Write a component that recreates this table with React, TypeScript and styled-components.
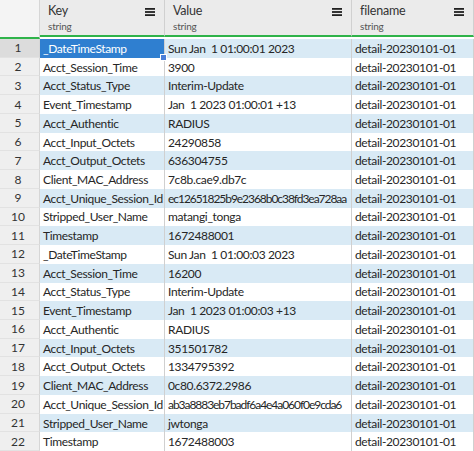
import React from "react";
import styled, { createGlobalStyle } from "styled-components";

const Global = createGlobalStyle`
  html, body { margin: 0; padding: 0; background: #fff; }
  body { font-family: "Lato", "Noto Sans", sans-serif; color: #222; overflow: hidden; }
`;

const ROW_H = 18.74;

const Grid = styled.div`
  display: grid;
  grid-template-columns: 40px 125px 187px 122px;
  width: 474px;
  overflow: hidden;
`;

const HeaderCorner = styled.div`
  height: 37px;
  background: #f4f4f4;
  border-right: 1px solid #d6d6d6;
  border-bottom: 2px solid #2fb34a;
`;

const HeaderCell = styled.div`
  height: 37px;
  box-sizing: border-box;
  background: #ebebeb;
  border-right: 1px solid #d0d0d0;
  border-bottom: 2px solid #2fb34a;
  padding: 3px 9px 0 8px;
  display: flex;
  justify-content: space-between;
  align-items: flex-start;
`;

const HeaderText = styled.div`
  display: flex;
  flex-direction: column;
`;

const HeaderTitle = styled.span`
  font-size: 12.5px;
  letter-spacing: -0.2px;
  line-height: 16px;
  color: #333;
`;

const HeaderType = styled.span`
  font-size: 10px;
  letter-spacing: -0.2px;
  line-height: 15px;
  color: #555;
`;

const MenuIcon = styled.svg`
  margin-top: 5px;
  flex: none;
`;

const NumCell = styled.div<{ $sel?: boolean }>`
  height: ${ROW_H}px;
  box-sizing: border-box;
  background: ${(p) => (p.$sel ? "#dcdcdc" : "#efefef")};
  border-right: 1px solid #d6d6d6;
  border-bottom: 1px solid #e2e2e2;
  font-size: 12px;
  color: #333;
  display: flex;
  align-items: center;
  justify-content: center;
  padding-right: 3px;
`;

const Cell = styled.div<{ $odd: boolean; $sel?: boolean; $tight?: boolean }>`
  position: relative;
  height: ${ROW_H}px;
  box-sizing: border-box;
  background: ${(p) => (p.$sel ? "#2f7fd0" : p.$odd ? "#d9eaf5" : "#ffffff")};
  color: ${(p) => (p.$sel ? "#ffffff" : "#262626")};
  border-right: 1px solid #d0d0d0;
  font-size: 12px;
  letter-spacing: ${(p) => (p.$tight ? "-1.05px" : "-0.35px")};
  padding: 0 0 0 3px;
  white-space: pre;
  overflow: ${(p) => (p.$sel ? "visible" : "hidden")};
  display: flex;
  align-items: center;
`;

const Handle = styled.span`
  position: absolute;
  right: -3px;
  bottom: -3px;
  width: 5px;
  height: 5px;
  background: #4a7fd8;
  border: 1px solid #fff;
  box-sizing: content-box;
  z-index: 2;
`;

const rows: [string, string][] = [
  ["_DateTimeStamp", "Sun Jan  1 01:00:01 2023"],
  ["Acct_Session_Time", "3900"],
  ["Acct_Status_Type", "Interim-Update"],
  ["Event_Timestamp", "Jan  1 2023 01:00:01 +13"],
  ["Acct_Authentic", "RADIUS"],
  ["Acct_Input_Octets", "24290858"],
  ["Acct_Output_Octets", "636304755"],
  ["Client_MAC_Address", "7c8b.cae9.db7c"],
  ["Acct_Unique_Session_Id", "ec12651825b9e2368b0c38fd3ea728aa"],
  ["Stripped_User_Name", "matangi_tonga"],
  ["Timestamp", "1672488001"],
  ["_DateTimeStamp", "Sun Jan  1 01:00:03 2023"],
  ["Acct_Session_Time", "16200"],
  ["Acct_Status_Type", "Interim-Update"],
  ["Event_Timestamp", "Jan  1 2023 01:00:03 +13"],
  ["Acct_Authentic", "RADIUS"],
  ["Acct_Input_Octets", "351501782"],
  ["Acct_Output_Octets", "1334795392"],
  ["Client_MAC_Address", "0c80.6372.2986"],
  ["Acct_Unique_Session_Id", "ab3a8883eb7badf6a4e4a060f0e9cda6"],
  ["Stripped_User_Name", "jwtonga"],
  ["Timestamp", "1672488003"],
];

const Menu = () => (
  <MenuIcon width="10" height="8" viewBox="0 0 10 8">
    <rect x="0" y="0" width="10" height="1.8" fill="#222" />
    <rect x="0" y="3.1" width="10" height="1.8" fill="#222" />
    <rect x="0" y="6.2" width="10" height="1.8" fill="#222" />
  </MenuIcon>
);

const Header = ({ title }: { title: string }) => (
  <HeaderCell>
    <HeaderText>
      <HeaderTitle>{title}</HeaderTitle>
      <HeaderType>string</HeaderType>
    </HeaderText>
    <Menu />
  </HeaderCell>
);

export default function App() {
  return (
    <>
      <Global />
      <Grid>
        <HeaderCorner />
        <Header title="Key" />
        <Header title="Value" />
        <Header title="filename" />
        {rows.map(([k, v], i) => {
          const odd = i % 2 === 0;
          const sel = i === 0;
          return (
            <React.Fragment key={i}>
              <NumCell $sel={sel}>{i + 1}</NumCell>
              <Cell $odd={odd} $sel={sel}>
                {k}
                {sel && <Handle />}
              </Cell>
              <Cell $odd={odd} $tight={v.length > 26}>
                {v}
              </Cell>
              <Cell $odd={odd}>detail-20230101-01</Cell>
            </React.Fragment>
          );
        })}
      </Grid>
    </>
  );
}
